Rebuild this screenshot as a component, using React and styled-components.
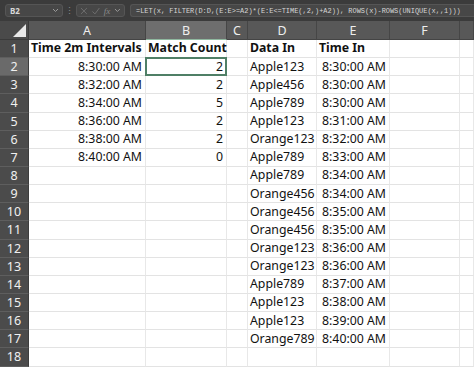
import React from "react";
import styled, { createGlobalStyle } from "styled-components";

const Global = createGlobalStyle`
  html, body { margin: 0; padding: 0; background: #ffffff; }
  body { width: 474px; height: 367px; overflow: hidden; }
`;

const Page = styled.div`
  width: 474px;
  height: 367px;
  display: flex;
  flex-direction: column;
  overflow: hidden;
  font-family: "Noto Sans", "Open Sans", sans-serif;
`;

const FormulaBar = styled.div`
  height: 21px;
  background: #3b3b3b;
  display: flex;
  align-items: center;
  padding: 0 0 0 5px;
  box-sizing: border-box;
`;

const Box = styled.div`
  height: 13px;
  box-sizing: border-box;
  background: #474747;
  border: 1px solid #555;
  border-radius: 3px;
  display: flex;
  align-items: center;
`;

const NameBox = styled(Box)`
  width: 58px;
  justify-content: space-between;
  padding: 0 3px 0 4px;
  color: #d8d8d8;
  font-size: 8px;
  font-weight: 700;
`;

const Dots = styled.div`
  width: 13px;
  color: #8a8a8a;
  font-size: 9px;
  text-align: center;
  line-height: 1;
`;

const FnBox = styled(Box)`
  width: 49px;
  padding: 0 3px;
  gap: 4px;
  color: #777;
`;

const FormulaBox = styled(Box)`
  flex: 1;
  margin-left: 5px;
  border-radius: 3px 0 0 3px;
  border-right: none;
  padding-left: 5px;
  font-family: "Liberation Mono", "DejaVu Sans Mono", monospace;
  font-size: 6.95px;
  color: #d6d6d6;
  white-space: nowrap;
  overflow: hidden;
`;

const Fx = styled.span`
  font-family: "Liberation Serif", serif;
  font-style: italic;
  font-size: 9px;
  color: #8c8c8c;
`;

const Sheet = styled.div`
  display: grid;
  grid-template-columns: 29px 117px 81px 21px 69px 73px 70px 1fr;
  grid-template-rows: 19px repeat(18, 18.15px);
  flex: 1;
`;

const Corner = styled.div`
  background: #4a4a4a;
  border-right: 1px solid #3a3a3a;
  border-bottom: 1px solid #3a3a3a;
  position: relative;
  box-sizing: border-box;
  &::after {
    content: "";
    position: absolute;
    right: 2px;
    bottom: 2px;
    width: 0;
    height: 0;
    border-left: 13px solid transparent;
    border-bottom: 13px solid #e8e8e8;
  }
`;

const ColHead = styled.div`
  background: ${(p) => (p.$active ? "#6e6e6e" : "#585858")};
  color: #eeeeee;
  font-size: 12.5px;
  display: flex;
  align-items: center;
  justify-content: center;
  border-right: 1px solid #464646;
  border-bottom: 1px solid ${(p) => (p.$active ? "#8fb89f" : "#444")};
  box-sizing: border-box;
`;

const RowHead = styled.div`
  background: ${(p) => (p.$active ? "#6a6a6a" : "#4b4b4b")};
  color: #f0f0f0;
  font-size: 12.5px;
  display: flex;
  align-items: center;
  justify-content: center;
  border-bottom: 1px solid #5e5e5e;
  border-right: 1px solid #3d3d3d;
  box-sizing: border-box;
`;

const Cell = styled.div`
  position: relative;
  box-sizing: border-box;
  border-right: 1px solid #e8e8e8;
  border-bottom: 1px solid #e3e3e3;
  font-size: 12.3px;
  color: #111;
  font-weight: ${(p) => (p.$bold ? 700 : 400)};
  display: flex;
  align-items: center;
  justify-content: ${(p) => (p.$right ? "flex-end" : "flex-start")};
  padding: 0 3px 0 2px;
  white-space: nowrap;
  overflow: visible;
  line-height: 1;
`;

const Selection = styled.div`
  position: absolute;
  left: -1px;
  top: -1px;
  right: -1px;
  bottom: -1px;
  border: 2px solid #4f7f66;
  pointer-events: none;
`;

const Chevron = () => (
  <svg width="7" height="5" viewBox="0 0 7 5">
    <path d="M1 1 L3.5 3.5 L6 1" stroke="#9a9a9a" strokeWidth="1" fill="none" />
  </svg>
);

const XIcon = () => (
  <svg width="8" height="8" viewBox="0 0 8 8">
    <path d="M1 1 L7 7 M7 1 L1 7" stroke="#6f6f6f" strokeWidth="1" />
  </svg>
);

const CheckIcon = () => (
  <svg width="8" height="8" viewBox="0 0 8 8">
    <path d="M0.5 4.5 L3 7 L7.5 1" stroke="#6f6f6f" strokeWidth="1" fill="none" />
  </svg>
);

const cols = ["A", "B", "C", "D", "E", "F", ""];

const colA = ["Time 2m Intervals", "8:30:00 AM", "8:32:00 AM", "8:34:00 AM", "8:36:00 AM", "8:38:00 AM", "8:40:00 AM"];
const colB = ["Match Count", "2", "2", "5", "2", "2", "0"];
const colD = [
  "Data In", "Apple123", "Apple456", "Apple789", "Apple123", "Orange123", "Apple789", "Apple789",
  "Orange456", "Orange456", "Orange456", "Orange123", "Orange123", "Apple789", "Apple123", "Apple123", "Orange789",
];
const colE = [
  "Time In", "8:30:00 AM", "8:30:00 AM", "8:30:00 AM", "8:31:00 AM", "8:32:00 AM", "8:33:00 AM", "8:34:00 AM",
  "8:34:00 AM", "8:35:00 AM", "8:35:00 AM", "8:36:00 AM", "8:36:00 AM", "8:37:00 AM", "8:38:00 AM", "8:39:00 AM", "8:40:00 AM",
];

export default function App() {
  const rows = [];
  for (let r = 0; r < 18; r++) {
    const header = r === 0;
    rows.push(
      <React.Fragment key={r}>
        <RowHead $active={r === 1}>{r + 1}</RowHead>
        <Cell $bold={header} $right={!header}>{colA[r] || ""}</Cell>
        <Cell $bold={header} $right={!header}>
          {colB[r] || ""}
          {r === 1 && <Selection />}
        </Cell>
        <Cell />
        <Cell $bold={header}>{colD[r] || ""}</Cell>
        <Cell $bold={header} $right={!header}>{colE[r] || ""}</Cell>
        <Cell />
        <Cell />
      </React.Fragment>
    );
  }
  return (
    <Page>
      <Global />
      <FormulaBar>
        <NameBox>
          <span>B2</span>
          <Chevron />
        </NameBox>
        <Dots>⋮</Dots>
        <FnBox>
          <XIcon />
          <CheckIcon />
          <Fx>fx</Fx>
          <Chevron />
        </FnBox>
        <FormulaBox>=LET(x, FILTER(D:D,(E:E&gt;=A2)*(E:E&lt;=TIME(,2,)+A2)), ROWS(x)-ROWS(UNIQUE(x,,1)))</FormulaBox>
      </FormulaBar>
      <Sheet>
        <Corner />
        {cols.map((c, i) => (
          <ColHead key={i} $active={c === "B"}>{c}</ColHead>
        ))}
        {rows}
      </Sheet>
    </Page>
  );
}
